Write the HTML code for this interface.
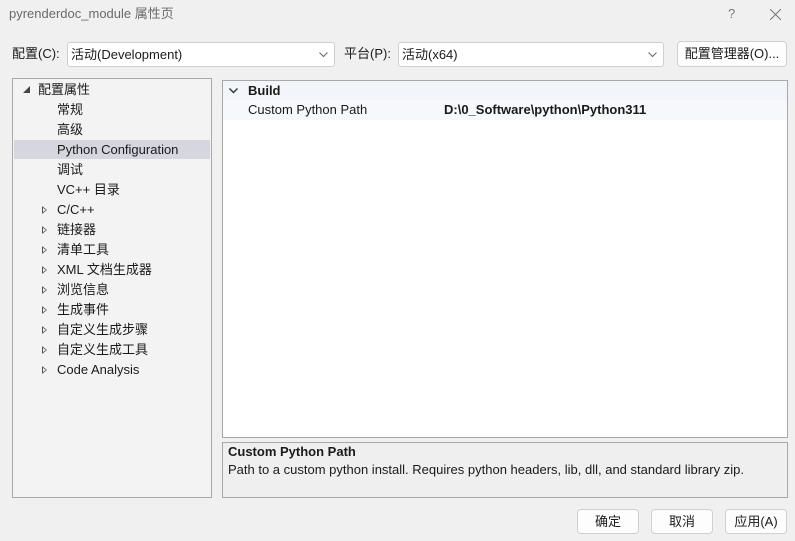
<!DOCTYPE html>
<html><head><meta charset="utf-8"><style>
*{margin:0;padding:0;box-sizing:border-box}
body{width:795px;height:541px;background:#f0f0f0;font-family:"Liberation Sans","Noto Sans CJK SC",sans-serif;font-size:13px;color:#1a1a1a;position:relative;overflow:hidden}
.a{position:absolute;white-space:nowrap;line-height:20px}
.dd{position:absolute;background:#fff;border:1px solid #cfcfcf;border-radius:3px;height:25px;padding:0 0 0 3px;line-height:23px}
.dd svg{position:absolute;right:6px;top:9px}
.btn{position:absolute;background:#fdfdfd;border:1px solid #d0d0d0;border-radius:4px;text-align:center;line-height:23px}
.tri{position:absolute;left:42px;width:0;height:0;border-left:5px solid #555;border-top:4px solid transparent;border-bottom:4px solid transparent}
.tri:after{content:"";position:absolute;left:-4px;top:-2px;border-left:3px solid #f3f3f3;border-top:2px solid transparent;border-bottom:2px solid transparent}
</style></head><body>
<div class="a" style="left:9px;top:4px;color:#6a6a6a">pyrenderdoc_module 属性页</div>
<div class="a" style="left:728px;top:4px;color:#777">?</div>
<svg class="a" style="left:770px;top:9px" width="11" height="11"><path d="M0 0L11 11M11 0L0 11" stroke="#777" stroke-width="1"/></svg>

<div class="a" style="left:12px;top:44px">配置(C):</div>
<div class="dd" style="left:67px;top:42px;width:268px">活动(Development)<svg width="9" height="6"><path d="M0.5 0.5L4.5 4.5L8.5 0.5" stroke="#666" fill="none"/></svg></div>
<div class="a" style="left:344px;top:44px">平台(P):</div>
<div class="dd" style="left:398px;top:42px;width:266px">活动(x64)<svg width="9" height="6"><path d="M0.5 0.5L4.5 4.5L8.5 0.5" stroke="#666" fill="none"/></svg></div>
<div class="btn" style="left:677px;top:41px;width:110px;height:26px;line-height:24px">配置管理器(O)...</div>

<div class="a" style="left:12px;top:78px;width:200px;height:420px;background:#f3f3f3;border:1px solid #a8a8a8"></div>
<div class="a" style="left:14px;top:140px;width:196px;height:19px;background:#d5d6de"></div>
<svg class="a" style="left:23px;top:86px" width="7" height="7"><path d="M7 0L7 7L0 7Z" fill="#444"/></svg>
<div class="a" style="left:38px;top:80px">配置属性</div>
<div class="a" style="left:57px;top:100px">常规</div>
<div class="a" style="left:57px;top:120px">高级</div>
<div class="a" style="left:57px;top:140px">Python Configuration</div>
<div class="a" style="left:57px;top:160px">调试</div>
<div class="a" style="left:57px;top:180px">VC++ 目录</div>
<div class="tri" style="top:206px"></div><div class="a" style="left:57px;top:200px">C/C++</div>
<div class="tri" style="top:226px"></div><div class="a" style="left:57px;top:220px">链接器</div>
<div class="tri" style="top:246px"></div><div class="a" style="left:57px;top:240px">清单工具</div>
<div class="tri" style="top:266px"></div><div class="a" style="left:57px;top:260px">XML 文档生成器</div>
<div class="tri" style="top:286px"></div><div class="a" style="left:57px;top:280px">浏览信息</div>
<div class="tri" style="top:306px"></div><div class="a" style="left:57px;top:300px">生成事件</div>
<div class="tri" style="top:326px"></div><div class="a" style="left:57px;top:320px">自定义生成步骤</div>
<div class="tri" style="top:346px"></div><div class="a" style="left:57px;top:340px">自定义生成工具</div>
<div class="tri" style="top:366px"></div><div class="a" style="left:57px;top:360px">Code Analysis</div>

<div class="a" style="left:222px;top:80px;width:566px;height:358px;background:#fff;border:1px solid #a8a8a8"></div>
<div class="a" style="left:223px;top:81px;width:564px;height:19px;background:#f2f5f9"></div>
<div class="a" style="left:223px;top:100px;width:564px;height:20px;background:#f6f8fb"></div>
<svg class="a" style="left:229px;top:88px" width="9" height="6"><path d="M0.5 0.5L4.5 4.5L8.5 0.5" stroke="#333" stroke-width="1.4" fill="none"/></svg>
<div class="a" style="left:248px;top:81px;font-weight:bold">Build</div>
<div class="a" style="left:248px;top:100px">Custom Python Path</div>
<div class="a" style="left:444px;top:100px;font-weight:bold">D:\0_Software\python\Python311</div>

<div class="a" style="left:222px;top:442px;width:566px;height:56px;background:#efefef;border:1px solid #a8a8a8"></div>
<div class="a" style="left:228px;top:442px;font-weight:bold">Custom Python Path</div>
<div class="a" style="left:228px;top:460px">Path to a custom python install. Requires python headers, lib, dll, and standard library zip.</div>

<div class="btn" style="left:577px;top:509px;width:62px;height:25px">确定</div>
<div class="btn" style="left:651px;top:509px;width:62px;height:25px">取消</div>
<div class="btn" style="left:725px;top:509px;width:62px;height:25px">应用(A)</div>
</body></html>
